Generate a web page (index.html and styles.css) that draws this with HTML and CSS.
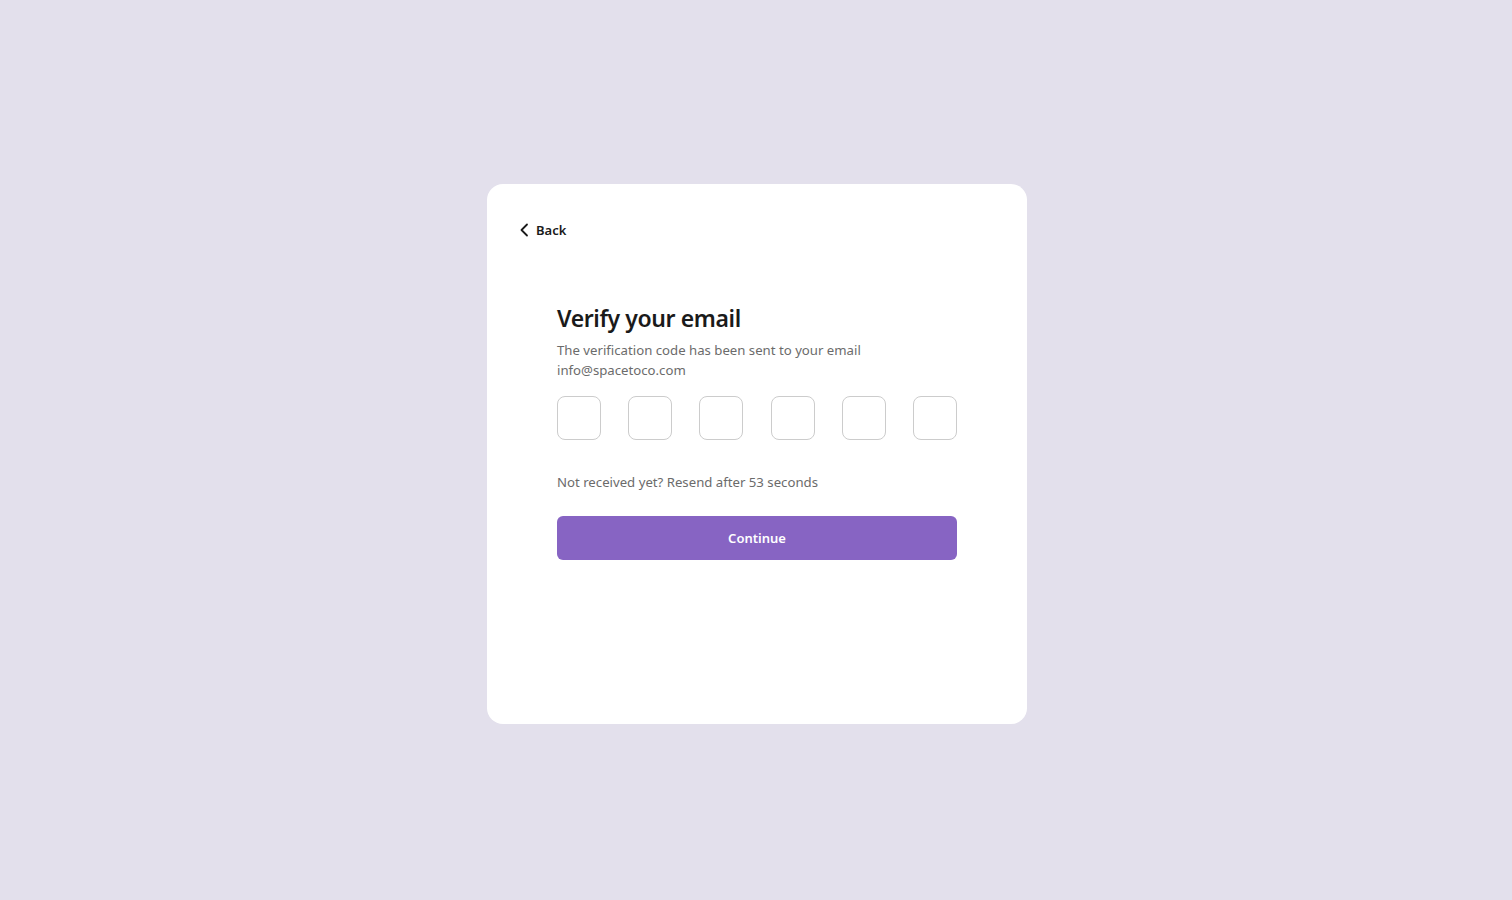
FILE: index.html
```html
<!DOCTYPE html>
<html lang="en">
<head>
<meta charset="utf-8">
<title>Verify your email</title>
<link rel="stylesheet" href="styles.css">
</head>
<body>
<main class="page">
  <section class="card">
    <a class="back" href="#">
      <svg class="back-icon" width="16" height="16" viewBox="0 0 16 16" fill="none"><path d="M10 2.5 L4.5 8 L10 13.5" stroke="#1a1a1a" stroke-width="1.8" stroke-linecap="round" stroke-linejoin="round"/></svg>
      <span>Back</span>
    </a>
    <div class="content">
      <h1 class="title">Verify your email</h1>
      <p class="subtitle">The verification code has been sent to your email<br>info@spacetoco.com</p>
      <div class="otp">
        <input class="otp-box" type="text" maxlength="1">
        <input class="otp-box" type="text" maxlength="1">
        <input class="otp-box" type="text" maxlength="1">
        <input class="otp-box" type="text" maxlength="1">
        <input class="otp-box" type="text" maxlength="1">
        <input class="otp-box" type="text" maxlength="1">
      </div>
      <p class="resend">Not received yet? Resend after 53 seconds</p>
      <button class="continue" type="button">Continue</button>
    </div>
  </section>
</main>
</body>
</html>
```
FILE: styles.css
```css
* { box-sizing: border-box; }
html, body { margin: 0; padding: 0; }
body {
  background: #e3e0ec;
  font-family: "Noto Sans", "Open Sans", sans-serif;
  color: #1a1a1a;
}
.page {
  width: 1512px;
  height: 900px;
  padding: 8px 0 0 2px;
  display: flex;
  align-items: center;
  justify-content: center;
}
.card {
  width: 540px;
  height: 540px;
  background: #ffffff;
  border-radius: 16px;
  padding: 36px 30px;
  display: flex;
  flex-direction: column;
}
.back {
  display: flex;
  align-items: center;
  gap: 3px;
  height: 20px;
  color: #1a1a1a;
  text-decoration: none;
  font-size: 13px;
  font-weight: 600;
}
.back-icon { display: block; }
.content {
  padding-left: 40px;
  width: 440px;
  display: flex;
  flex-direction: column;
}
.title {
  margin: 62px 0 0;
  font-size: 23px;
  line-height: 32px;
  font-weight: 600;
  letter-spacing: -0.4px;
  color: #1a1a1a;
}
.subtitle {
  margin: 6px 0 0;
  font-size: 13.2px;
  line-height: 20px;
  color: #6b6b6b;
}
.otp {
  margin-top: 16px;
  display: flex;
  justify-content: space-between;
}
.otp-box {
  width: 44px;
  height: 44px;
  border: 1px solid #cccccc;
  border-radius: 8px;
  background: #fff;
  padding: 0;
  text-align: center;
  font-size: 18px;
  outline: none;
}
.resend {
  margin: 32px 0 0;
  font-size: 13.2px;
  line-height: 20px;
  color: #6b6b6b;
}
.continue {
  margin-top: 24px;
  height: 44px;
  width: 400px;
  border: none;
  border-radius: 6px;
  background: #8764c3;
  color: #ffffff;
  font-family: inherit;
  font-size: 13px;
  font-weight: 600;
}
```
